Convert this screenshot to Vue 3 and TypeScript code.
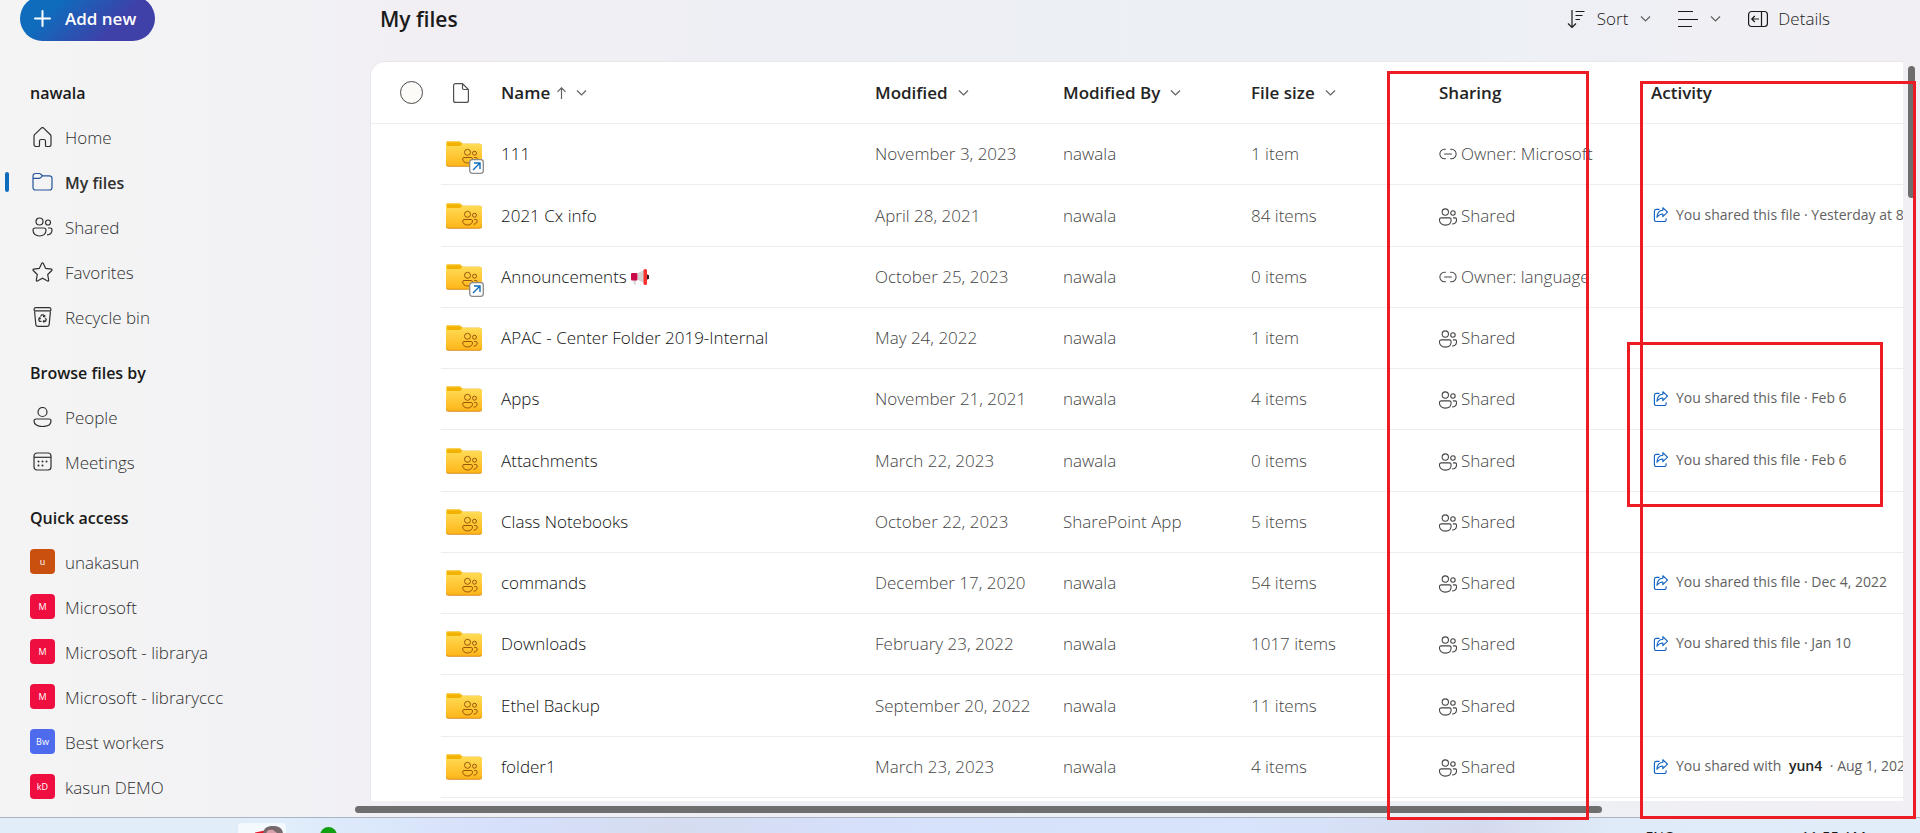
<script setup lang="ts">
interface NavItem { label: string; icon: string; active?: boolean }
interface QuickItem { label: string; initials: string; color: string }
interface FileRow {
  name: string; modified: string; by: string; size: string
  shortcut?: boolean; megaphone?: boolean; owner?: string
  date?: string; person?: string
}

const places: NavItem[] = [
  { label: 'Home', icon: 'home' },
  { label: 'My files', icon: 'folder', active: true },
  { label: 'Shared', icon: 'people' },
  { label: 'Favorites', icon: 'star' },
  { label: 'Recycle bin', icon: 'bin' },
]
const browse: NavItem[] = [
  { label: 'People', icon: 'person' },
  { label: 'Meetings', icon: 'calendar' },
]
const quick: QuickItem[] = [
  { label: 'unakasun', initials: 'u', color: '#ca5010' },
  { label: 'Microsoft', initials: 'M', color: '#ee0f40' },
  { label: 'Microsoft - librarya', initials: 'M', color: '#ee0f40' },
  { label: 'Microsoft - libraryccc', initials: 'M', color: '#ee0f40' },
  { label: 'Best workers', initials: 'Bw', color: '#4f6bed' },
  { label: 'kasun DEMO', initials: 'kD', color: '#ee0f40' },
]
const columns = ['Modified', 'Modified By', 'File size']
const rows: FileRow[] = [
  { name: '111', modified: 'November 3, 2023', by: 'nawala', size: '1 item', shortcut: true, owner: 'Microsoft' },
  { name: '2021 Cx info', modified: 'April 28, 2021', by: 'nawala', size: '84 items', date: 'Yesterday at 8:15 AM' },
  { name: 'Announcements', modified: 'October 25, 2023', by: 'nawala', size: '0 items', shortcut: true, megaphone: true, owner: 'language' },
  { name: 'APAC - Center Folder 2019-Internal', modified: 'May 24, 2022', by: 'nawala', size: '1 item' },
  { name: 'Apps', modified: 'November 21, 2021', by: 'nawala', size: '4 items', date: 'Feb 6' },
  { name: 'Attachments', modified: 'March 22, 2023', by: 'nawala', size: '0 items', date: 'Feb 6' },
  { name: 'Class Notebooks', modified: 'October 22, 2023', by: 'SharePoint App', size: '5 items' },
  { name: 'commands', modified: 'December 17, 2020', by: 'nawala', size: '54 items', date: 'Dec 4, 2022' },
  { name: 'Downloads', modified: 'February 23, 2022', by: 'nawala', size: '1017 items', date: 'Jan 10' },
  { name: 'Ethel Backup', modified: 'September 20, 2022', by: 'nawala', size: '11 items' },
  { name: 'folder1', modified: 'March 23, 2023', by: 'nawala', size: '4 items', date: 'Aug 1, 2023', person: 'yun4' },
]
</script>

<template>
  <div class="screen">
    <svg class="defs" aria-hidden="true">
      <defs>
        <linearGradient id="folder-face" x1="0" y1="0" x2="0" y2="1">
          <stop offset="0" stop-color="#ffe05c" />
          <stop offset="1" stop-color="#ffb61a" />
        </linearGradient>
        <symbol id="i-people" viewBox="0 0 20 20">
          <circle cx="7" cy="4.5" r="3.5" />
          <circle cx="15.5" cy="5.5" r="2.5" />
          <path d="M2.5 11h9a2 2 0 0 1 2 2c0 3.6-2.6 6-6.500 6S.5 16.600.5 13a2 2 0 0 1 2-2z" />
          <path d="M15.500 11h2.200a1.800 1.800 0 0 1 1.800 1.800c0 3-1.800 5-5 5" />
        </symbol>
        <symbol id="i-home" viewBox="0 0 20 20">
          <path d="M1.500 9.200c0-.6.2-1.100.6-1.500L8.800 1.100a1.700 1.700 0 0 1 2.400 0l6.700 6.600c.4.4.6.9.6 1.500v8.300a2 2 0 0 1-2 2h-2.500a1 1 0 0 1-1-1V14a1.500 1.500 0 0 0-1.500-1.500h-3A1.500 1.500 0 0 0 7 14v4.500a1 1 0 0 1-1 1H3.500a2 2 0 0 1-2-2z" />
        </symbol>
        <symbol id="i-folder" viewBox="0 0 20 20">
          <path d="M.5 4A2.500 2.500 0 0 1 3 1.500h3.700c.5 0 .9.200 1.300.5l2 1.800h7A2.500 2.500 0 0 1 19.500 6.300v9.200A2.500 2.500 0 0 1 17 18H3a2.500 2.500 0 0 1-2.500-2.500zM.5 6.300h6.200c.5 0 .9-.2 1.300-.5l2-2" />
        </symbol>
        <symbol id="i-star" viewBox="0 0 20 20">
          <path d="M9.300 1.200a.8.8 0 0 1 1.400 0l2.500 5.200 5.700.8a.8.800 0 0 1 .4 1.300l-4.100 4 1 5.700a.8.800 0 0 1-1.100.8L10 16.300 4.900 19a.8.800 0 0 1-1.100-.8l1-5.700-4.100-4a.8.800 0 0 1 .4-1.300l5.700-.8z" />
        </symbol>
        <symbol id="i-bin" viewBox="0 0 20 20">
          <path d="M3.500.6h13a2 2 0 0 1 2 1.900c0 .7-.6 1.300-1.300 1.300H2.800c-.7 0-1.300-.6-1.300-1.300a2 2 0 0 1 2-1.900zM2 3.800l1.300 13.500a2.300 2.300 0 0 0 2.300 2.100h8.800a2.300 2.300 0 0 0 2.300-2.100L18 3.800" />
          <path d="M8 9.500 9.200 7.800h1.600L12 9.500m.8 1.500 1 1.700-.9 1.600H11M9 14.300H7.100l-.9-1.600 1-1.700M12.200 8v1.700h-1.700M11.800 13.200l-1 1.100 1 1.200M6 11.200l1.400-.4.500 1.500" />
        </symbol>
        <symbol id="i-person" viewBox="0 0 20 20">
          <circle cx="10" cy="5" r="4.500" />
          <path d="M3.500 12h13a2 2 0 0 1 2 2c0 3.500-3.500 5.500-8.500 5.500S1.500 17.500 1.500 14a2 2 0 0 1 2-2z" />
        </symbol>
        <symbol id="i-calendar" viewBox="0 0 20 20">
          <rect x="1.500" y="1" width="17" height="17" rx="3" />
          <path d="M1.500 5.300h17" />
          <path stroke-width="2" stroke-linecap="round" d="M6 9.500h.01M10 9.500h.01M14 9.500h.01M6 13.500h.01M10 13.500h.01" />
        </symbol>
        <symbol id="i-link" viewBox="0 0 20 14">
          <path d="M7.500 1.500H6a5.500 5.500 0 0 0 0 11h1.500M12.500 1.500H14a5.500 5.500 0 0 1 0 11h-1.500M5.500 7h9" />
        </symbol>
        <symbol id="i-share" viewBox="0 0 16 16">
          <path d="M7 2.500H3.500a2 2 0 0 0-2 2v9a2 2 0 0 0 2 2h8.500a2 2 0 0 0 2-2V12" />
          <path d="M10.500.8v2.700C6.500 3.700 4.500 6.500 4.200 11c1.600-2.400 3.300-3.500 6.300-3.500v2.800l5-4.800z" stroke-linejoin="round" />
        </symbol>
        <symbol id="i-chevron" viewBox="0 0 10 6"><path d="m.5.5 4.500 4.500 4.500-4.500" /></symbol>
      </defs>
    </svg>

    <div class="workspace">
      <nav class="sidebar" aria-label="OneDrive">
        <button class="add" type="button">
          <svg width="17" height="17" viewBox="0 0 17 17"><path d="M8.500 1v15M1 8.500h15" stroke-width="2" stroke-linecap="round" /></svg>
          Add new
        </button>
        <h2>nawala</h2>
        <a v-for="item in places" :key="item.label" href="#" class="nav" :class="{ active: item.active }">
          <svg class="line nav-icon"><use :href="'#i-' + item.icon" /></svg>{{ item.label }}
        </a>
        <h2 class="spaced">Browse files by</h2>
        <a v-for="item in browse" :key="item.label" href="#" class="nav">
          <svg class="line nav-icon"><use :href="'#i-' + item.icon" /></svg>{{ item.label }}
        </a>
        <h2 class="spaced">Quick access</h2>
        <a v-for="item in quick" :key="item.label" href="#" class="nav">
          <span class="tile" :style="{ background: item.color }">{{ item.initials }}</span>{{ item.label }}
        </a>
      </nav>

      <main>
        <header>
          <h1>My files</h1>
          <div class="tools">
            <button type="button">
              <svg class="line" width="18" height="20" viewBox="0 0 18 20"><path d="M5 1v17M1 14.500l4 4 4-4M8.500 2.500h9M8.500 6.500h7M8.500 10.500h4.500" /></svg>
              Sort
              <svg class="line chev"><use href="#i-chevron" /></svg>
            </button>
            <button type="button" aria-label="View options">
              <svg class="line" width="20" height="18" viewBox="0 0 20 18"><path d="M0 1.500h15M0 9.500h20M0 16.500h14" /></svg>
              <svg class="line chev"><use href="#i-chevron" /></svg>
            </button>
            <button type="button" class="details">
              <svg class="line" width="20" height="18" viewBox="0 0 20 18"><rect x=".6" y="1.500" width="18.800" height="15" rx="3" /><path d="M13.500 1.500v15M11 9H4M6.800 6 3.800 9l3 3" /></svg>
              Details
            </button>
          </div>
        </header>

        <div class="body">
          <div class="panel">
            <table>
              <colgroup>
                <col class="c-select" /><col class="c-icon" /><col /><col class="c-mid" /><col class="c-mid" /><col class="c-mid" /><col class="c-share" /><col class="c-act" />
              </colgroup>
              <thead>
                <tr>
                  <th><input type="checkbox" aria-label="Select all items" /></th>
                  <th>
                    <svg class="line doc" width="16" height="20" viewBox="0 0 16 20"><path d="M9.500.6H2.600a2 2 0 0 0-2 2v14.800a2 2 0 0 0 2 2h10.800a2 2 0 0 0 2-2V6.500zM9.500.6V5a1.500 1.500 0 0 0 1.500 1.500h4.400" /></svg>
                  </th>
                  <th>
                    <button type="button">Name
                      <svg class="line up" width="9" height="12" viewBox="0 0 9 12"><path d="M4.500 12V1M.5 4.800l4-4 4 4" /></svg>
                      <svg class="line chev"><use href="#i-chevron" /></svg>
                    </button>
                  </th>
                  <th v-for="c in columns" :key="c">
                    <button type="button">{{ c }} <svg class="line chev"><use href="#i-chevron" /></svg></button>
                  </th>
                  <th>Sharing</th>
                  <th>Activity</th>
                </tr>
              </thead>
              <tbody>
                <tr v-for="row in rows" :key="row.name">
                  <td class="blank"></td>
                  <td>
                    <span class="folder">
                      <svg width="36" height="26" viewBox="0 0 36 26">
                        <path d="M0 2.500A2.200 2.200 0 0 1 2.200.3h11.300c1.500 0 2 2.400 3.500 2.400H33.500A2.500 2.500 0 0 1 36 5.200v18a2.500 2.500 0 0 1-2.500 2.500h-31A2.500 2.500 0 0 1 0 23.200z" fill="#d98912" />
                        <path d="M0 2.500A2.200 2.200 0 0 1 2.200.3h11.300c1.500 0 2 2.400 3.500 2.400H33.500A2.500 2.500 0 0 1 36 5.200v17a2.500 2.500 0 0 1-2.500 2.500h-31A2.500 2.500 0 0 1 0 22.200z" fill="url(#folder-face)" />
                        <path d="M1 1.300h12.500c1.500 0 2.200.7 2.200 1.700 0 1.200-.9 1.900-2.200 1.900H1z" fill="#f2b200" />
                        <g fill="none" stroke="#96560b" stroke-width="1">
                          <circle cx="21.500" cy="11.300" r="3" /><circle cx="28.500" cy="12.200" r="2" />
                          <path d="M18 16.500h7.200c.8 0 1.300.6 1.300 1.300 0 2.500-2 4.200-4.900 4.200s-4.900-1.700-4.900-4.200c0-.7.5-1.300 1.300-1.300zM28.200 16.500h1.700c.8 0 1.300.5 1.300 1.200 0 2.100-1.300 3.500-3.500 3.500" />
                        </g>
                      </svg>
                      <svg v-if="row.shortcut" class="shortcut" width="15" height="15" viewBox="0 0 15 15">
                        <rect x=".7" y=".7" width="13.600" height="13.600" rx="2.500" fill="#fff" stroke="#8a8a8a" stroke-width="1.300" />
                        <path d="m4 11 6.500-6.500M5 4h6v6" fill="none" stroke="#0f6cbd" stroke-width="1.400" />
                      </svg>
                    </span>
                  </td>
                  <td class="name">
                    <a href="#">{{ row.name }}</a>
                    <svg v-if="row.megaphone" class="mega" width="18" height="16" viewBox="0 0 18 16">
                      <path d="M7 4 13 1v13l-6-3z" fill="#d3d3d3" /><path d="M2 11h3v4.500H3z" fill="#d8d8d8" />
                      <rect x="0" y="4" width="6.500" height="7.500" rx="1" fill="#ca0b4a" />
                      <path d="M16 5.500a2.500 2.500 0 0 1 0 5z" fill="#3b1a22" /><rect x="12.500" width="3.500" height="16" rx="1.500" fill="#f8312f" />
                    </svg>
                  </td>
                  <td>{{ row.modified }}</td>
                  <td>{{ row.by }}</td>
                  <td>{{ row.size }}</td>
                  <td>
                    <span class="sharing">
                      <svg v-if="row.owner" class="line link"><use href="#i-link" /></svg>
                      <svg v-else class="line group"><use href="#i-people" /></svg>
                      {{ row.owner ? 'Owner: ' + row.owner : 'Shared' }}
                    </span>
                  </td>
                  <td>
                    <span v-if="row.date" class="activity">
                      <svg class="line share"><use href="#i-share" /></svg>
                      <span v-if="row.person">You shared with <b>{{ row.person }}</b> · {{ row.date }}</span>
                      <span v-else>You shared this file · {{ row.date }}</span>
                    </span>
                  </td>
                </tr>
              </tbody>
            </table>
          </div>
          <div class="track-v"><div class="thumb"></div></div>
        </div>
        <div class="track-h"><div class="thumb"></div></div>
      </main>
    </div>

    <footer class="taskbar">
      <div class="app-tile">
        <svg width="48" height="12" viewBox="0 0 48 12"><path d="M17 9.500l10-2v4.500H17z" fill="#e81123" /><path d="M25 12c0-6 3-9 10-9s10 3 10 9z" fill="#77696b" /><path d="M28 12c0-4 3-6 7-5l4 3v2z" fill="#dba0ae" /></svg>
      </div>
      <span class="dot"></span>
      <span class="lang">ENG</span>
      <time>11:55 AM</time>
    </footer>

    <div class="mark mark-sharing"></div>
    <div class="mark mark-activity"></div>
    <div class="mark mark-dates"></div>
  </div>
</template>

<style>
body { margin: 0; overflow: hidden; }
</style>

<style scoped>
* { box-sizing: border-box; }
.screen {
  position: relative; display: flex; flex-direction: column; height: 100vh; overflow: hidden;
  font: 300 17px/24px "Open Sans", "Noto Sans", sans-serif; color: #1a1a1a;
  background: linear-gradient(90deg, #f4f4f4 0%, #f2f2f5 14%, #f2eff4 21%, #edeff4 42%, #ecf0f5 75%, #f1eff4 96%);
}
.defs { position: absolute; width: 0; height: 0; }
.line { fill: none; stroke: currentColor; stroke-width: 1.200; flex: none; }
button { font: inherit; color: inherit; background: none; border: 0; padding: 0; display: inline-flex; align-items: center; white-space: nowrap; }
a { color: inherit; text-decoration: none; }
h1, h2, th, .add, .nav.active { font-weight: 600; }
.workspace { flex: 1; min-height: 0; display: flex; }
.sidebar { width: 355px; flex: none; overflow: hidden; display: flex; flex-direction: column; }
.add {
  flex: none; align-self: flex-start; height: 45px; margin: -4px 0 29px 20px; padding: 0 19px 0 14px; gap: 14px;
  border-radius: 23px; color: #fff; background: linear-gradient(135deg, #0f6cbd 25%, #3f40a8 70%);
}
.add svg { stroke: #fff; }
h2 { flex: none; margin: 0; padding-left: 30px; font-size: 16px; line-height: 46px; height: 45px; }
.spaced { margin-top: 10px; }
.nav { flex: none; height: 45px; display: flex; align-items: center; padding-left: 30px; gap: 10px; color: #303030; position: relative; }
.nav.active { font-size: 16px; }
.nav.active svg { color: #24549b; }
.nav.active::before { content: ""; position: absolute; left: 5px; top: 12px; width: 4px; height: 20px; border-radius: 2px; background: #0f6cbd; }
.nav-icon { width: 21px; height: 20px; margin: 0 2px 2px; }
.tile { width: 25px; height: 25px; margin-bottom: 2px; border-radius: 4px; color: #fff; font-size: 9px; font-weight: 400; line-height: 25px; text-align: center; }
main { flex: 1; min-width: 0; display: flex; flex-direction: column; }
header { flex: none; height: 61px; display: flex; justify-content: space-between; align-items: flex-start; padding: 7px 90px 0 25px; }
h1 { margin: 0; font-size: 21px; line-height: 24px; }
.tools { display: flex; gap: 27px; }
.tools button { gap: 12px; }
.tools .details { gap: 10px; }
.chev { width: 11px; height: 6px; color: #616161; }
.body { flex: 1; min-height: 0; display: flex; padding-left: 15px; }
.panel { flex: 1; min-width: 0; overflow: hidden; background: #fff; border: solid #e8e8ec; border-width: 1px 0 0 1px; border-radius: 15px 0 0 0; }
table { width: 100%; table-layout: fixed; border-collapse: separate; border-spacing: 0; color: #444; }
.c-select { width: 70px; }
.c-icon { width: 60px; }
.c-mid { width: 188px; }
.c-share { width: 212px; }
.c-act { width: 252px; }
th, td { padding: 0; text-align: left; white-space: nowrap; border-bottom: 1px solid #ededed; }
th { height: 62px; color: #242424; font-size: 17px; }
td { height: 61px; }
tbody tr:nth-child(4n + 2) td { height: 62px; }
.blank { border-bottom-color: transparent; }
th button { gap: 10px; }
.up { margin-left: -3px; color: #616161; }
th input { appearance: none; display: block; width: 23px; height: 23px; margin: 0 0 0 29px; border: 1px solid #4a4a4a; border-radius: 50%; background: #fcfbf8; }
.doc { display: block; margin-left: 12px; color: #505050; }
.folder { position: relative; display: block; width: 36px; height: 26px; margin-left: 5px; }
.folder > svg { display: block; }
.shortcut { position: absolute; right: -2px; bottom: -7px; }
.name { color: #111; }
.mega { margin-left: 4px; vertical-align: -2px; }
.sharing, .activity { display: flex; align-items: center; }
.sharing { gap: 4px; }
.link { width: 18px; height: 12px; }
.group { width: 18px; height: 18px; margin-top: 2px; }
.activity { gap: 8px; padding: 0 0 2px 2px; color: #616161; font-size: 14px; font-weight: 400; }
.activity b { color: #242424; font-weight: 600; margin: 0 4px; }
.share { width: 15px; height: 15px; color: #0f62c4; }
.track-v { width: 17px; flex: none; padding: 5px 5px 0 5px; }
.track-v .thumb { height: 18%; }
.track-h { flex: none; height: 16px; padding: 5px 6px 0 0; }
.track-h .thumb { width: 80%; height: 7px; }
.thumb { border-radius: 4px; background: #6e6e6e; }
.taskbar {
  flex: none; height: 16px; overflow: hidden; display: flex; align-items: flex-start; border-top: 1px solid #aab4c2;
  padding: 0 54px 0 238px; font-size: 15px; font-weight: 400; line-height: 20px;
  background: linear-gradient(90deg, #e1eefa 0 14%, #dbe7fb 20%, #d6e0fa 26%, #d5dcf0 35%, #d6e0fa 45%, #d8e4fb 65%, #d4daee 77%, #dfebf8 84%, #e1eefa);
}
.app-tile { width: 48px; height: 20px; margin-top: 5px; border-radius: 4px 4px 0 0; background: #f4f9fd; }
.app-tile svg { display: block; }
.dot { width: 17px; height: 17px; margin: 9px 0 0 34px; border-radius: 50%; background: #12a012; }
.lang { margin: 9px 0 0 auto; font-size: 14px; }
time { margin: 8px 0 0 127px; }
.mark { position: absolute; border: 3px solid #ed1c24; pointer-events: none; }
.mark-sharing { right: 331px; top: 71px; width: 202px; bottom: 13px; }
.mark-activity { right: 4px; top: 81px; width: 276px; bottom: 14px; }
.mark-dates { right: 37px; top: 342px; width: 256px; height: 165px; }
</style>
